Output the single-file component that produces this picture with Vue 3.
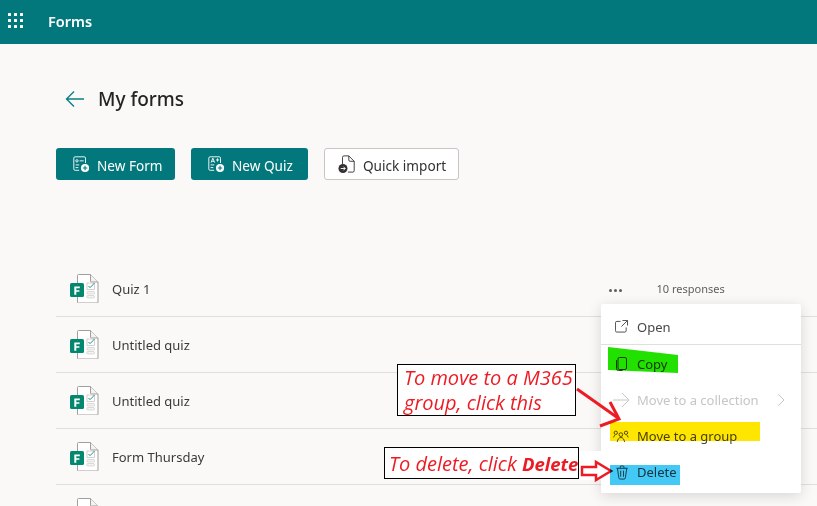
<script setup>
const rows = [
  { name: 'Quiz 1', responses: '10 responses' },
  { name: 'Untitled quiz' },
  { name: 'Untitled quiz' },
  { name: 'Form Thursday' },
  { name: '' },
]
</script>

<template>
  <div class="page">
    <header class="topbar">
      <svg class="waffle" width="16" height="16" viewBox="0 0 16 16" fill="#fff">
        <g v-for="y in [0, 6, 12]" :key="y">
          <rect v-for="x in [0, 6, 12]" :key="x" :x="x" :y="y" width="3" height="3" rx=".6" />
        </g>
      </svg>
      <span class="brand">Forms</span>
    </header>

    <main class="content">
      <div class="title-row">
        <svg width="20" height="18" viewBox="0 0 20 18" fill="none" stroke="#0b7f84" stroke-width="1.4">
          <path d="M19 9H2M9 1.500 1.500 9 9 16.500" />
        </svg>
        <h1>My forms</h1>
      </div>

      <div class="actions">
        <button class="btn primary form">
          <svg width="18" height="18" viewBox="0 0 20 20" fill="none" stroke="#fff" stroke-width="1">
            <path d="M8 17H3.500A1.500 1.500 0 0 1 2 15.500V3.500A1.500 1.500 0 0 1 3.500 2h10A1.500 1.500 0 0 1 15 3.500V9" />
            <circle cx="5.500" cy="6.500" r="1.300" />
            <path d="M8.500 6.500H13M4 11h4M4 14h3" />
            <circle cx="14.500" cy="14.500" r="4.500" fill="#fff" stroke="none" />
            <path d="M14.500 12v5M12 14.500h5" stroke="#03787c" stroke-width="1.200" />
          </svg>
          <span>New Form</span>
        </button>
        <button class="btn primary quiz">
          <svg width="18" height="18" viewBox="0 0 20 20" fill="none" stroke="#fff" stroke-width="1">
            <path d="M8 17H3.500A1.500 1.500 0 0 1 2 15.500V3.500A1.500 1.500 0 0 1 3.500 2h10A1.500 1.500 0 0 1 15 3.500V9" />
            <path d="M4.500 8.500 6.500 3.500 8.500 8.500M5.200 7h2.600M10 5.500h3.500M11.750 3.700v3.600M4 11h4M4 14h3" />
            <circle cx="14.500" cy="14.500" r="4.500" fill="#fff" stroke="none" />
            <path d="M14.500 12v5M12 14.500h5" stroke="#03787c" stroke-width="1.200" />
          </svg>
          <span>New Quiz</span>
        </button>
        <button class="btn outline">
          <svg width="18" height="20" viewBox="0 0 20 22" fill="none" stroke="#323130" stroke-width="1">
            <path d="M5 11V3.500A1.500 1.500 0 0 1 6.500 2H12l6 6v10.500a1.500 1.500 0 0 1-1.500 1.500H11" />
            <path d="M12 2v4.500A1.500 1.500 0 0 0 13.500 8H18" />
            <circle cx="5.500" cy="16" r="5" fill="#323130" stroke="none" />
            <path d="M3 16h5M6 14l2 2-2 2" stroke="#fff" />
          </svg>
          <span>Quick import</span>
        </button>
      </div>

      <ul class="list">
        <li v-for="(row, i) in rows" :key="i" class="row">
          <svg class="doc" width="29" height="29" viewBox="0 0 29 29">
            <path d="M7.500 9V1.500a1 1 0 0 1 1-1h12l7.500 7.500v20a1 1 0 0 1-1 1H8.500a1 1 0 0 1-1-1V23" fill="#fff" stroke="#a19f9d" />
            <path d="M20.500 .5V7a1 1 0 0 0 1 1H28" fill="#f3f2f1" stroke="#a19f9d" />
            <template v-if="row.name">
              <rect x="17" y="9" width="7.500" height="6.500" fill="#fff" stroke="#c8c6c4" stroke-width=".8" />
              <path d="M18.500 12 20 13.700 24.500 9" fill="none" stroke="#2a9a8f" stroke-width="1" />
              <rect x="17" y="17.500" width="7.500" height="2.500" rx=".8" fill="#f3f2f1" stroke="#c8c6c4" stroke-width=".6" />
              <rect x="17" y="21.500" width="7.500" height="2.500" rx=".8" fill="#f3f2f1" stroke="#c8c6c4" stroke-width=".6" />
              <rect x="0" y="9" width="14" height="14" rx="1.500" fill="#03876f" />
              <path d="M4.300 12.500h5.500v1.700H6.300v2h3.100v1.600H6.300v2.900h-2z" fill="#fff" />
            </template>
          </svg>
          <span class="name">{{ row.name }}</span>
          <template v-if="row.responses">
            <span class="dots"><i></i><i></i><i></i></span>
            <span class="responses">{{ row.responses }}</span>
          </template>
        </li>
      </ul>
    </main>

    <div class="menu">
      <div class="item open">
        <svg width="18" height="13" viewBox="0 0 14 14" preserveAspectRatio="xMinYMid meet" fill="none" stroke="#484644" stroke-width="1">
          <path d="M6 1.500H2A1.500 1.500 0 0 0 .5 3v8.500A1.500 1.500 0 0 0 2 13h8.500a1.500 1.500 0 0 0 1.500-1.500V8M8 .5h5.500V6M13.500 .5 7 7" />
        </svg>
        <span>Open</span>
      </div>
      <div class="rule"></div>
      <div class="item">
        <span class="mark green"></span>
        <svg class="nudge-right" width="18" height="14" viewBox="0 0 12 14" preserveAspectRatio="xMinYMid meet" fill="none" stroke="#484644" stroke-width="1">
          <rect x="2" y=".5" width="8.500" height="12" rx="1.500" />
          <path d="M.5 3v8.500A2 2 0 0 0 2.500 13.500h4" />
        </svg>
        <span>Copy</span>
      </div>
      <div class="item disabled">
        <svg class="nudge-left" width="18" height="16" viewBox="0 0 18 16" preserveAspectRatio="xMinYMid meet" fill="none" stroke="#c8c6c4" stroke-width="1">
          <path d="M0 8h16M9 1 16 8 9 15" />
        </svg>
        <span>Move to a collection</span>
        <svg class="chev" width="8" height="14" viewBox="0 0 8 14" fill="none" stroke="#c8c6c4" stroke-width="1">
          <path d="M1 1l6 6-6 6" />
        </svg>
      </div>
      <div class="item">
        <span class="mark yellow"></span>
        <svg class="nudge-left" width="18" height="13" viewBox="0 0 17 14" preserveAspectRatio="xMinYMid meet" fill="none" stroke="#484644" stroke-width="1">
          <circle cx="3" cy="3" r="1.800" /><circle cx="14" cy="3" r="1.800" /><circle cx="8.500" cy="5" r="2" />
          <path d="M.5 8 2 5.500M16.500 8 15 5.500M4.500 13c.5-3 2-5 4-5s3.500 2 4 5" />
        </svg>
        <span>Move to a group</span>
      </div>
      <div class="item">
        <span class="mark blue"></span>
        <svg class="nudge-right" width="18" height="15" viewBox="0 0 13 16" preserveAspectRatio="xMinYMid meet" fill="none" stroke="#484644" stroke-width="1">
          <path d="M.5 3.500h12M4.500 3.500V2.200A1.200 1.200 0 0 1 5.700 1h1.600a1.200 1.200 0 0 1 1.200 1.200v1.300" />
          <path d="M1.500 3.500 3 13.500A1.500 1.500 0 0 0 4.500 15h4A1.500 1.500 0 0 0 10 13.500l1.500-10M5 6v6.500M8 6v6.500" />
        </svg>
        <span>Delete</span>
      </div>
    </div>

    <div class="note note-group">To move to a M365<br />group, click this</div>
    <div class="note note-delete">To delete, click <b>Delete</b></div>

    <svg class="arrows" width="817" height="506" viewBox="0 0 817 506" fill="none">
      <path d="M577 389 618 418" stroke="#ed1c24" stroke-width="3" />
      <path d="M610 402 619 419 600 426" stroke="#ed1c24" stroke-width="3" />
      <path d="M582 467h14v-5l15 9-15 9v-5h-14z" fill="#fff" stroke="#ed1c24" stroke-width="2.500" />
    </svg>
  </div>
</template>

<style>
html, body { margin: 0; }
</style>

<style scoped>
.page {
  position: relative;
  width: 817px;
  height: 506px;
  overflow: hidden;
  background: #faf9f8;
  color: #323130;
  font-family: "Noto Sans", "Open Sans", sans-serif;
}
.topbar {
  display: flex;
  align-items: center;
  height: 44px;
  padding-left: 8px;
  background: #03787c;
  color: #fff;
}
.waffle { width: 16px; height: 16px; margin-top: -3px; }
.brand { margin-left: 24px; font-size: 14.500px; font-weight: 600; margin-top: -3px; }
.content { padding: 0 0 0 56px; }
.title-row {
  display: flex;
  align-items: center;
  gap: 13px;
  height: 40px;
  margin-top: 35px;
  padding-left: 9px;
}
.title-row h1 { margin: 0; font-size: 19px; font-weight: 500; color: #252423; }
.actions { display: flex; gap: 16px; margin-top: 29px; }
.btn {
  display: flex;
  align-items: center;
  gap: 7px;
  height: 32px;
  padding: 0 0 0 16px;
  border-radius: 3px;
  border: 0;
  font: 400 13.600px "Noto Sans", "Open Sans", sans-serif;
  box-sizing: border-box;
}
.btn span { margin-top: 2px; }
.primary { background: #03787c; color: #fff; }
.form { width: 119px; }
.quiz { width: 117px; }
.outline {
  width: 135px;
  padding-left: 13px;
  background: #fff;
  border: 1px solid #c8c6c4;
  color: #323130;
}
.list { list-style: none; margin: 81px 0 0; padding: 0; }
.row {
  display: flex;
  align-items: center;
  height: 55px;
  border-bottom: 1px solid #e1dfdd;
  padding-left: 14px;
}
.doc { flex: none; margin-top: -1px; }
.name { margin-left: 13px; margin-top: 0; font-size: 13px; color: #3b3a39; }
.dots { display: flex; gap: 2px; margin-left: 459px; margin-top: 3px; }
.dots i { width: 3px; height: 3px; border-radius: 50%; background: #605e5c; }
.responses { margin-left: 34px; margin-top: -1px; font-size: 11px; color: #605e5c; }
.menu {
  position: absolute;
  left: 601px;
  top: 304px;
  width: 200px;
  height: 189px;
  padding-top: 5px;
  box-sizing: border-box;
  background: #fff;
  border-radius: 2px;
  box-shadow: 0 3px 14px rgba(0, 0, 0, .14);
  font-size: 13px;
  color: #484644;
}
.item {
  position: relative;
  display: flex;
  align-items: center;
  height: 36px;
  padding-left: 14px;
}
.item svg { position: relative; flex: none; width: 18px; }
.item .nudge-right { margin: 0 -1px 0 1px; }
.item .nudge-left { margin: 0 2px 0 -2px; }
.item > span:not(.mark) { position: relative; margin-left: 4px; }
.open { height: 35px; }
.rule { height: 1px; background: #e1dfdd; margin-bottom: 1px; }
.disabled { color: #c8c6c4; }
.item .chev { width: 8px; margin-left: 18px; }
.mark { position: absolute; z-index: 1; mix-blend-mode: multiply; }
.green {
  left: 7px;
  top: 1px;
  width: 70px;
  height: 26px;
  background: #22e000;
  clip-path: polygon(0 0, 100% 31%, 100% 100%, 0 88%);
}
.yellow { left: 9px; top: 4px; width: 150px; height: 19px; background: #ffe600; }
.blue { left: 9px; top: 11px; width: 70px; height: 20px; background: #44c8f5; }
.note {
  position: absolute;
  box-sizing: border-box;
  border: 1px solid #000;
  background: #fff;
  color: #ed1c24;
  font-family: "Open Sans", "Noto Sans", sans-serif;
  font-style: italic;
  font-size: 20px;
  white-space: nowrap;
}
.note b { font-size: 18.500px; }
.note-group {
  left: 397px;
  top: 364px;
  width: 179px;
  height: 52px;
  padding-left: 6px;
  line-height: 25px;
}
.note-delete {
  left: 384px;
  top: 447px;
  width: 195px;
  height: 32px;
  padding: 1px 0 0 4px;
  line-height: 30px;
}
.note-delete::after {
  content: "";
  position: absolute;
  left: 100%;
  top: 3px;
  width: 22px;
  height: 29px;
  margin-left: 1px;
  background: #fff;
}
.arrows { position: absolute; left: 0; top: 0; pointer-events: none; }
</style>
